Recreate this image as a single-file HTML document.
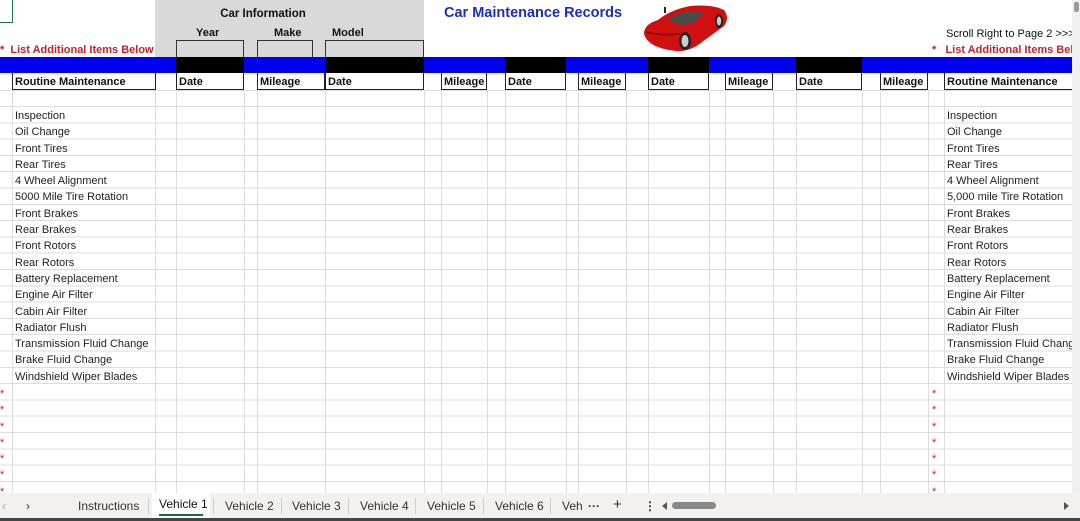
<!DOCTYPE html>
<html><head><meta charset="utf-8"><style>
*{margin:0;padding:0;box-sizing:border-box}
body{width:1080px;height:521px;overflow:hidden;background:#fff;position:relative;font-family:"Liberation Sans",sans-serif;font-size:11px;color:#111}
.a{position:absolute}
.v{position:absolute;top:90px;height:403px;width:1px;background:#dcdcdc}
.grid{position:absolute;left:0;top:106px;width:1072px;height:387px;background:repeating-linear-gradient(to bottom,#dcdcdc 0,#dcdcdc 1px,transparent 1px,transparent 16.3px)}
.hb{position:absolute;top:73px;height:17px;border:1px solid #222;border-top:none;font-weight:bold;font-size:11px;line-height:19px;padding-left:2px;background:#fff}
.it{position:absolute;font-size:11px;line-height:16.3px;color:#222}
.st{position:absolute;color:#d02020;font-size:11px;line-height:16.3px}
.red{color:#c8202a;font-weight:bold;font-size:11px}
.tab{position:absolute;top:499px;font-size:12px;color:#333}
</style></head><body>
<div class="grid"></div>
<div class="a" style="left:0;top:90px;width:1072px;height:1px;background:#dcdcdc"></div>
<div class="v" style="left:12px"></div><div class="v" style="left:155px"></div><div class="v" style="left:176px"></div><div class="v" style="left:244px"></div><div class="v" style="left:257px"></div><div class="v" style="left:325px"></div><div class="v" style="left:424px"></div><div class="v" style="left:441px"></div><div class="v" style="left:487px"></div><div class="v" style="left:505px"></div><div class="v" style="left:566px"></div><div class="v" style="left:578px"></div><div class="v" style="left:626px"></div><div class="v" style="left:648px"></div><div class="v" style="left:709px"></div><div class="v" style="left:725px"></div><div class="v" style="left:773px"></div><div class="v" style="left:796px"></div><div class="v" style="left:862px"></div><div class="v" style="left:880px"></div><div class="v" style="left:928px"></div><div class="v" style="left:944px"></div>
<!-- top -->
<div class="a" style="left:0;top:0;width:13px;height:23px;border-right:1.5px solid #217346;border-bottom:1.5px solid #217346"></div>
<div class="a" style="left:155px;top:0;width:269px;height:57px;background:#d9d9d9"></div>
<div class="a" style="left:155px;top:8px;width:216px;text-align:center;font-weight:bold;font-size:11.5px">Car Information</div>
<div class="a" style="left:196px;top:27px;font-weight:bold">Year</div>
<div class="a" style="left:274px;top:27px;font-weight:bold">Make</div>
<div class="a" style="left:332px;top:27px;font-weight:bold">Model</div>
<div class="a" style="left:176px;top:40px;width:68px;height:18px;border:1px solid #333;background:#d9d9d9"></div>
<div class="a" style="left:257px;top:40px;width:56px;height:18px;border:1px solid #333;background:#d9d9d9"></div>
<div class="a" style="left:325px;top:40px;width:99px;height:18px;border:1px solid #333;background:#d9d9d9"></div>
<div class="a red" style="left:0;top:44px">*&nbsp; List Additional Items Below</div>
<div class="a" style="left:444px;top:5px;color:#1a2fb8;font-weight:bold;font-size:14.5px">Car Maintenance Records</div>
<svg class="a" style="left:640px;top:2px" width="92" height="52" viewBox="0 0 92 52">
<path d="M4 32 Q4 22 18 18 Q30 8 50 4 Q72 2 84 8 Q90 16 84 24 L62 40 Q50 50 36 49 Q8 46 4 32Z" fill="#d01010"/>
<path d="M6 30 Q20 34 40 32" stroke="#8a0000" stroke-width="1.5" fill="none"/>
<path d="M28 17 Q42 8 62 9 Q64 14 52 21 Q38 26 28 17Z" fill="#4a4a4a"/>
<ellipse cx="45" cy="39" rx="6" ry="9" fill="#222"/><ellipse cx="45" cy="39" rx="3.5" ry="6" fill="#ccc"/>
<ellipse cx="79" cy="19" rx="4" ry="7" fill="#222"/><ellipse cx="79" cy="19" rx="2.2" ry="4.5" fill="#ccc"/>
<rect x="24" y="5" width="2" height="6" fill="#222"/>
</svg>
<div class="a" style="left:946px;top:28px;font-size:11px">Scroll Right to Page 2 &gt;&gt;&gt;</div>
<div class="a red" style="left:932px;top:44px;white-space:nowrap;width:140px;overflow:hidden">*&nbsp;&nbsp; List Additional Items Below</div>
<!-- band -->
<div class="a" style="left:0;top:57px;width:1072px;height:16px;background:#0000f0"></div>
<div class="a" style="left:176px;top:57px;width:68px;height:16px;background:#000"></div>
<div class="a" style="left:325px;top:57px;width:99px;height:16px;background:#000"></div>
<div class="a" style="left:505px;top:57px;width:61px;height:16px;background:#000"></div>
<div class="a" style="left:648px;top:57px;width:61px;height:16px;background:#000"></div>
<div class="a" style="left:796px;top:57px;width:66px;height:16px;background:#000"></div>
<div class="hb" style="left:12px;width:144px">Routine Maintenance</div>
<div class="hb" style="left:176px;width:68px">Date</div>
<div class="hb" style="left:257px;width:68px">Mileage</div>
<div class="hb" style="left:325px;width:99px">Date</div>
<div class="hb" style="left:441px;width:46px">Mileage</div>
<div class="hb" style="left:505px;width:61px">Date</div>
<div class="hb" style="left:578px;width:48px">Mileage</div>
<div class="hb" style="left:648px;width:61px">Date</div>
<div class="hb" style="left:725px;width:48px">Mileage</div>
<div class="hb" style="left:796px;width:66px">Date</div>
<div class="hb" style="left:880px;width:48px">Mileage</div>
<div class="hb" style="left:944px;width:140px">Routine Maintenance</div>
<!-- items -->
<div class="it" style="left:15px;top:108px">Inspection<br>Oil Change<br>Front Tires<br>Rear Tires<br>4 Wheel Alignment<br>5000 Mile Tire Rotation<br>Front Brakes<br>Rear Brakes<br>Front Rotors<br>Rear Rotors<br>Battery Replacement<br>Engine Air Filter<br>Cabin Air Filter<br>Radiator Flush<br>Transmission Fluid Change<br>Brake Fluid Change<br>Windshield Wiper Blades</div>
<div class="it" style="left:947px;top:108px;width:125px;white-space:nowrap;overflow:hidden">Inspection<br>Oil Change<br>Front Tires<br>Rear Tires<br>4 Wheel Alignment<br>5,000 mile Tire Rotation<br>Front Brakes<br>Rear Brakes<br>Front Rotors<br>Rear Rotors<br>Battery Replacement<br>Engine Air Filter<br>Cabin Air Filter<br>Radiator Flush<br>Transmission Fluid Change<br>Brake Fluid Change<br>Windshield Wiper Blades</div>
<div class="st" style="left:0;top:386px">*<br>*<br>*<br>*<br>*<br>*<br>*</div>
<div class="st" style="left:932px;top:386px">*<br>*<br>*<br>*<br>*<br>*<br>*</div>
<!-- scrollbar -->
<div class="a" style="left:1072px;top:0;width:8px;height:493px;background:#f0f0f0"></div>
<div class="a" style="left:1074px;top:2px;width:5px;height:10px;background:#999;border-radius:2px"></div>
<!-- tabs -->
<div class="a" style="left:0;top:493px;width:1080px;height:25px;background:#f2f1f0"></div>
<div class="a" style="left:0;top:518px;width:1080px;height:3px;background:#444"></div>
<div class="a" style="left:152px;top:493px;width:58px;height:25px;background:#fff"></div>
<div class="a" style="left:159px;top:514px;width:44px;height:2px;background:#1d6b45"></div>
<div class="tab" style="left:2px;color:#aaa">&lsaquo;</div>
<div class="tab" style="left:26px">&rsaquo;</div>
<div class="tab" style="left:78px">Instructions</div>
<div class="tab" style="left:159px;top:497px;color:#111">Vehicle 1</div>
<div class="tab" style="left:225px">Vehicle 2</div>
<div class="tab" style="left:292px">Vehicle 3</div>
<div class="tab" style="left:360px">Vehicle 4</div>
<div class="tab" style="left:427px">Vehicle 5</div>
<div class="tab" style="left:495px">Vehicle 6</div>
<div class="tab" style="left:562px">Veh</div>
<div class="tab" style="left:588px;font-weight:bold">···</div>
<div class="tab" style="left:613px;font-size:15px;top:496px">+</div>
<div class="tab" style="left:644px;font-weight:bold">⋮</div>
<div class="a" style="left:148px;top:498px;width:1px;height:16px;background:#ccc"></div>
<div class="a" style="left:213px;top:498px;width:1px;height:16px;background:#ccc"></div>
<div class="a" style="left:281px;top:498px;width:1px;height:16px;background:#ccc"></div>
<div class="a" style="left:348px;top:498px;width:1px;height:16px;background:#ccc"></div>
<div class="a" style="left:415px;top:498px;width:1px;height:16px;background:#ccc"></div>
<div class="a" style="left:483px;top:498px;width:1px;height:16px;background:#ccc"></div>
<div class="a" style="left:550px;top:498px;width:1px;height:16px;background:#ccc"></div>
<div class="a" style="left:662px;top:502px;width:0;height:0;border-top:4px solid transparent;border-bottom:4px solid transparent;border-right:5px solid #555"></div>
<div class="a" style="left:672px;top:502px;width:44px;height:7px;background:#888;border-radius:4px"></div>
<div class="a" style="left:1064px;top:502px;width:0;height:0;border-top:4px solid transparent;border-bottom:4px solid transparent;border-left:5px solid #555"></div>
</body></html>
